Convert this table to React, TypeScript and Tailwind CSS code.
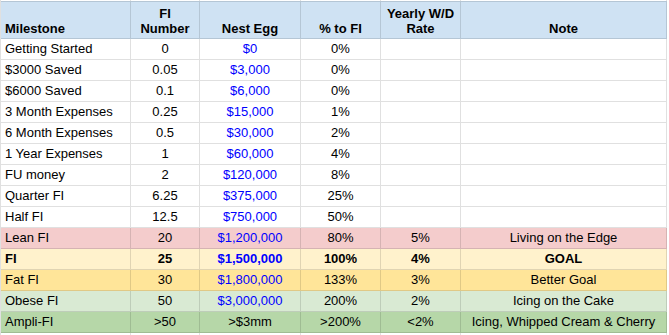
import React from 'react';

type Row = {
  label: string;
  fi: string;
  egg: string;
  pct: string;
  rate?: string;
  note?: string;
  bg?: string;
  bold?: boolean;
  eggBlack?: boolean;
};

const rows: Row[] = [
  { label: 'Getting Started', fi: '0', egg: '$0', pct: '0%' },
  { label: '$3000 Saved', fi: '0.05', egg: '$3,000', pct: '0%' },
  { label: '$6000 Saved', fi: '0.1', egg: '$6,000', pct: '0%' },
  { label: '3 Month Expenses', fi: '0.25', egg: '$15,000', pct: '1%' },
  { label: '6 Month Expenses', fi: '0.5', egg: '$30,000', pct: '2%' },
  { label: '1 Year Expenses', fi: '1', egg: '$60,000', pct: '4%' },
  { label: 'FU money', fi: '2', egg: '$120,000', pct: '8%' },
  { label: 'Quarter FI', fi: '6.25', egg: '$375,000', pct: '25%' },
  { label: 'Half FI', fi: '12.5', egg: '$750,000', pct: '50%' },
  { label: 'Lean FI', fi: '20', egg: '$1,200,000', pct: '80%', rate: '5%', note: 'Living on the Edge', bg: 'bg-[#f4cccc]' },
  { label: 'FI', fi: '25', egg: '$1,500,000', pct: '100%', rate: '4%', note: 'GOAL', bg: 'bg-[#fff2cc]', bold: true },
  { label: 'Fat FI', fi: '30', egg: '$1,800,000', pct: '133%', rate: '3%', note: 'Better Goal', bg: 'bg-[#ffe599]' },
  { label: 'Obese FI', fi: '50', egg: '$3,000,000', pct: '200%', rate: '2%', note: 'Icing on the Cake', bg: 'bg-[#d9ead3]' },
  { label: 'Ampli-FI', fi: '>50', egg: '>$3mm', pct: '>200%', rate: '<2%', note: 'Icing, Whipped Cream & Cherry', bg: 'bg-[#b6d7a8]', eggBlack: true },
];

const cols = 'grid grid-cols-[130px_69px_101px_80px_80px_206px]';
const line = 'border-[rgba(0,0,0,0.12)]';

export default function App() {
  return (
    <div className="w-[669px] h-[335px] overflow-hidden bg-white text-[13px] text-black font-['Liberation_Sans',Arial,sans-serif]">
      <div className={`w-[667px] border-l ${line}`}>
        {/* sliver of the row above */}
        <div className={`${cols} h-[1px]`}>
          {[0, 1, 2, 3, 4, 5].map((i) => (
            <div key={i} className={`border-r ${line}`} />
          ))}
        </div>

        {/* header */}
        <div className={`${cols} bg-[#cfe2f3] font-bold leading-[15px] border-t ${line}`}>
          <div className={`h-[37px] flex items-end pb-[2px] px-[4px] border-r border-b ${line}`}>Milestone</div>
          <div className={`h-[37px] flex items-end justify-center text-center pb-[2px] border-r border-b ${line}`}>FI<br />Number</div>
          <div className={`h-[37px] flex items-end justify-center pb-[2px] border-r border-b ${line}`}>Nest Egg</div>
          <div className={`h-[37px] flex items-end justify-center pb-[2px] border-r border-b ${line}`}>% to FI</div>
          <div className={`h-[37px] flex items-end justify-center text-center pb-[2px] border-r border-b ${line}`}>Yearly W/D<br />Rate</div>
          <div className={`h-[37px] flex items-end justify-center pb-[2px] border-r border-b ${line}`}>Note</div>
        </div>

        {rows.map((r) => (
          <div key={r.label} className={`${cols} leading-[20px] ${r.bg ?? ''} ${r.bold ? 'font-bold' : ''}`}>
            <div className={`h-[21px] px-[4px] whitespace-nowrap border-r border-b ${line}`}>{r.label}</div>
            <div className={`h-[21px] text-center border-r border-b ${line}`}>{r.fi}</div>
            <div className={`h-[21px] text-center border-r border-b ${line} ${r.eggBlack ? '' : 'text-[#0000ff]'}`}>{r.egg}</div>
            <div className={`h-[21px] text-center border-r border-b ${line}`}>{r.pct}</div>
            <div className={`h-[21px] text-center border-r border-b ${line}`}>{r.rate}</div>
            <div className={`h-[21px] text-center whitespace-nowrap border-r border-b ${line}`}>{r.note}</div>
          </div>
        ))}

        {/* top of the next row */}
        <div className={`${cols} h-[4px]`}>
          {[0, 1, 2, 3, 4, 5].map((i) => (
            <div key={i} className={`border-r ${line}`} />
          ))}
        </div>
      </div>
    </div>
  );
}
